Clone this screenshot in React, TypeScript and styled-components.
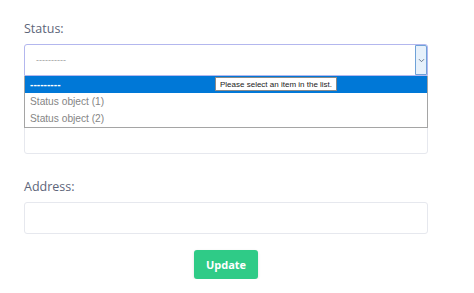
import React from 'react';
import styled, { createGlobalStyle } from 'styled-components';

const GlobalStyle = createGlobalStyle`
  body {
    margin: 0;
    background: #fff;
    font-family: 'Open Sans', 'Noto Sans', sans-serif;
  }
`;

const Page = styled.div`
  padding: 20px 0 0 24px;
  width: 404px;
`;

const Form = styled.form`
  display: flex;
  flex-direction: column;
`;

const Label = styled.label<{ $gap?: number }>`
  display: block;
  margin-top: ${({ $gap }) => $gap ?? 0}px;
  margin-bottom: 6px;
  font-size: 12.5px;
  line-height: 18px;
  color: #5d6579;
`;

const SelectWrap = styled.div`
  position: relative;
  height: 32px;
`;

const SelectBox = styled.div`
  box-sizing: border-box;
  height: 32px;
  display: flex;
  align-items: center;
  justify-content: space-between;
  border: 1px solid #b3b7ee;
  border-radius: 3px 3px 0 0;
  padding: 0 0 0 11px;
  font-family: 'Liberation Sans', Arial, sans-serif;
  font-size: 9px;
  color: #a0a0a0;
  background: #fff;
`;

const ArrowButton = styled.div`
  box-sizing: border-box;
  width: 12px;
  height: 30px;
  display: flex;
  align-items: center;
  justify-content: center;
  background: #e7f1fb;
  border: 1px solid #6fa2d8;
  border-radius: 0 2px 0 0;
  color: #5a6a80;
`;

const List = styled.ul`
  position: absolute;
  top: 32px;
  left: 0;
  right: 0;
  margin: 0;
  padding: 0;
  list-style: none;
  background: #fff;
  border: 1px solid #a5a5a5;
  border-top: none;
  z-index: 2;
  font-family: 'Liberation Sans', Arial, sans-serif;
  font-size: 10.2px;
`;

const Option = styled.li<{ $active?: boolean }>`
  height: 17px;
  line-height: 17px;
  padding-left: 5px;
  color: ${({ $active }) => ($active ? '#fff' : '#858585')};
  background: ${({ $active }) => ($active ? '#0078d7' : 'transparent')};
  font-weight: ${({ $active }) => ($active ? 700 : 400)};
`;

const Tooltip = styled.div`
  position: absolute;
  top: 33px;
  left: 191px;
  z-index: 3;
  padding: 0 4px;
  height: 14px;
  line-height: 13px;
  box-sizing: border-box;
  background: #fff;
  border: 1px solid #8a8a8a;
  font-family: 'Liberation Sans', Arial, sans-serif;
  font-size: 8px;
  color: #222;
  white-space: nowrap;
`;

const Input = styled.input<{ $gap?: number }>`
  box-sizing: border-box;
  display: block;
  width: 100%;
  height: 32px;
  margin-top: ${({ $gap }) => $gap ?? 0}px;
  border: 1px solid #e6e8ee;
  border-radius: 3px;
  background: #fff;
  outline: none;
`;

const ButtonRow = styled.div`
  display: flex;
  justify-content: center;
  margin-top: 16px;
`;

const Button = styled.button`
  width: 64px;
  height: 29px;
  border: none;
  border-radius: 3px;
  background: #2fcb87;
  color: #fff;
  font-family: 'Open Sans', sans-serif;
  font-weight: 700;
  font-size: 11px;
  box-shadow: 0 1px 3px rgba(0, 0, 0, 0.12);
`;

const Chevron = () => (
  <svg width="7" height="5" viewBox="0 0 7 5" fill="none">
    <path d="M1 1.2l2.5 2.5L6 1.2" stroke="currentColor" strokeWidth="0.9" />
  </svg>
);

const App = () => (
  <Page>
    <GlobalStyle />
    <Form onSubmit={(e) => e.preventDefault()}>
      <Label>Status:</Label>
      <SelectWrap>
        <SelectBox>
          <span>----------</span>
          <ArrowButton>
            <Chevron />
          </ArrowButton>
        </SelectBox>
        <List>
          <Option $active>---------</Option>
          <Option>Status object (1)</Option>
          <Option>Status object (2)</Option>
        </List>
        <Tooltip>Please select an item in the list.</Tooltip>
      </SelectWrap>
      <Input $gap={46} />
      <Label $gap={24}>Address:</Label>
      <Input />
      <ButtonRow>
        <Button type="submit">Update</Button>
      </ButtonRow>
    </Form>
  </Page>
);

export default App;
